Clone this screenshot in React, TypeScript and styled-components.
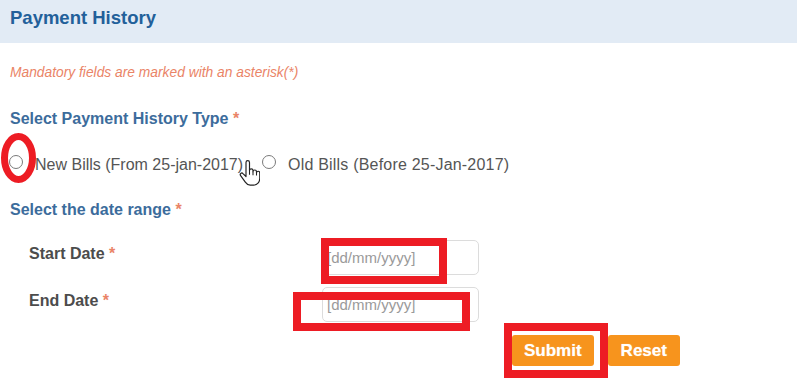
import React, { useState } from 'react';
import styled, { createGlobalStyle } from 'styled-components';

const GlobalStyle = createGlobalStyle`
  html, body {
    margin: 0;
    padding: 0;
    background: #ffffff;
  }
  body {
    font-family: "Liberation Sans", Arial, sans-serif;
  }
`;

const Page = styled.div`
  position: relative;
  width: 797px;
  height: 378px;
  overflow: hidden;
  background: #ffffff;
`;

const Header = styled.div`
  height: 43px;
  box-sizing: border-box;
  padding: 7px 10px 0;
  background-color: #e2ebf5;
`;

const Title = styled.h1`
  margin: 0;
  font-size: 18.5px;
  line-height: 22px;
  font-weight: bold;
  color: #22609a;
`;

const Content = styled.div`
  padding: 0 10px;
  display: flex;
  flex-direction: column;
`;

const Note = styled.p`
  margin: 22px 0 0;
  font-size: 13.8px;
  line-height: 16px;
  font-style: italic;
  color: #ea8467;
`;

const SectionTitle = styled.h2<{ $top: number }>`
  margin: ${p => p.$top}px 0 0;
  font-size: 16px;
  line-height: 20px;
  font-weight: bold;
  color: #3c6c9c;
`;

const Star = styled.span`
  color: #ea8467;
  font-weight: bold;
`;

const RadioRow = styled.div`
  margin-top: 26px;
  display: flex;
  align-items: flex-start;
  height: 20px;
`;

const RadioOption = styled.label<{ $first?: boolean; $spacing?: number }>`
  display: flex;
  align-items: flex-start;
  gap: 12px;
  margin-left: ${p => (p.$first ? '-1px' : '19px')};
  font-size: 16px;
  line-height: 20px;
  letter-spacing: ${p => p.$spacing ?? 0}px;
  color: #555555;
  cursor: pointer;
`;

const Radio = styled.input`
  appearance: none;
  margin: 0;
  width: 14px;
  height: 14px;
  border: 1px solid #7a7a7a;
  border-radius: 50%;
  background: #fff;
  box-sizing: border-box;
  flex-shrink: 0;

  &:checked {
    background: radial-gradient(circle, #3c6c9c 0 3px, #fff 3.5px);
  }
`;

const DateGrid = styled.div`
  margin-top: 20px;
  padding-left: 19px;
  display: grid;
  grid-template-columns: 293px 157px;
  grid-auto-rows: 35px;
  row-gap: 12px;
`;

const DateLabel = styled.label`
  padding-top: 4px;
  font-size: 16px;
  line-height: 20px;
  font-weight: bold;
  color: #4c4c4c;
`;

const DateInput = styled.input`
  box-sizing: border-box;
  width: 157px;
  height: 35px;
  padding: 0 4px;
  border: 1px solid #dcdcdc;
  border-radius: 5px;
  font-family: "Liberation Sans", Arial, sans-serif;
  font-size: 15px;
  color: #333;
  outline: none;

  &::placeholder {
    color: #9a9a9a;
  }
`;

const ButtonRow = styled.div`
  margin-top: 13px;
  padding-left: 502px;
  display: flex;
  gap: 14px;
`;

const OrangeButton = styled.button<{ $pad: number }>`
  height: 31px;
  padding: 0 ${p => p.$pad}px;
  border: none;
  border-radius: 3px;
  background-color: #f7941d;
  color: #ffffff;
  font-family: "Liberation Sans", Arial, sans-serif;
  font-size: 17px;
  font-weight: bold;
  cursor: pointer;
  text-shadow: 0 0 1px rgba(255, 255, 255, 0.6);
`;

const RedBox = styled.div<{ $x: number; $y: number; $w: number; $h: number }>`
  position: absolute;
  left: ${p => p.$x}px;
  top: ${p => p.$y}px;
  width: ${p => p.$w}px;
  height: ${p => p.$h}px;
  box-sizing: border-box;
  border: 8px solid #ed1c24;
  pointer-events: none;
`;

const RedRing = styled.svg`
  position: absolute;
  left: 0;
  top: 132px;
  pointer-events: none;
`;

const Cursor = styled.svg`
  position: absolute;
  left: 239px;
  top: 159px;
  pointer-events: none;
`;

const App: React.FC = () => {
  const [type, setType] = useState('');

  return (
    <Page>
      <GlobalStyle />
      <Header>
        <Title>Payment History</Title>
      </Header>
      <Content>
        <Note>Mandatory fields are marked with an asterisk(*)</Note>
        <SectionTitle $top={28}>
          Select Payment History Type <Star>*</Star>
        </SectionTitle>
        <RadioRow>
          <RadioOption $first>
            <Radio type="radio" name="type" checked={type === 'new'} onChange={() => setType('new')} />
            New Bills (From 25-jan-2017)
          </RadioOption>
          <RadioOption $spacing={0.2}>
            <Radio type="radio" name="type" checked={type === 'old'} onChange={() => setType('old')} />
            Old Bills (Before 25-Jan-2017)
          </RadioOption>
        </RadioRow>
        <SectionTitle $top={25}>
          Select the date range <Star>*</Star>
        </SectionTitle>
        <DateGrid>
          <DateLabel>
            Start Date <Star>*</Star>
          </DateLabel>
          <DateInput placeholder="[dd/mm/yyyy]" />
          <DateLabel>
            End Date <Star>*</Star>
          </DateLabel>
          <DateInput placeholder="[dd/mm/yyyy]" />
        </DateGrid>
        <ButtonRow>
          <OrangeButton $pad={12}>Submit</OrangeButton>
          <OrangeButton $pad={13}>Reset</OrangeButton>
        </ButtonRow>
      </Content>

      {/* annotation marks drawn over the form */}
      <RedRing width="40" height="54" viewBox="0 0 40 54">
        <ellipse cx="18.5" cy="26" rx="14" ry="21.5" fill="none" stroke="#ed1c24" strokeWidth="7" />
      </RedRing>
      <RedBox $x={321} $y={238} $w={126} $h={46} />
      <RedBox $x={293} $y={292} $w={177} $h={39} />
      <RedBox $x={504} $y={323} $w={104} $h={55} />
      <Cursor width="21" height="29" viewBox="0 0 18 24">
        <path
          d="M6 2.5a1.5 1.5 0 0 1 3 0V9.5a1.5 1.5 0 0 1 3 0V10.5a1.5 1.5 0 0 1 3 0V11.5a1.4 1.4 0 0 1 2.8 0V16c0 3.5-2.2 6-5.3 6H9.6c-2 0-3.1-1-4.2-2.6L1.4 13.8a1.3 1.3 0 0 1 2-1.7L6 14.6Z"
          fill="#ffffff"
          stroke="#222"
          strokeWidth="1"
          strokeLinejoin="round"
        />
        <path d="M9 9.5V13M12 10.5V13.4M15 11.5V13.8" stroke="#222" strokeWidth="0.9" fill="none" />
      </Cursor>
    </Page>
  );
};

export default App;
